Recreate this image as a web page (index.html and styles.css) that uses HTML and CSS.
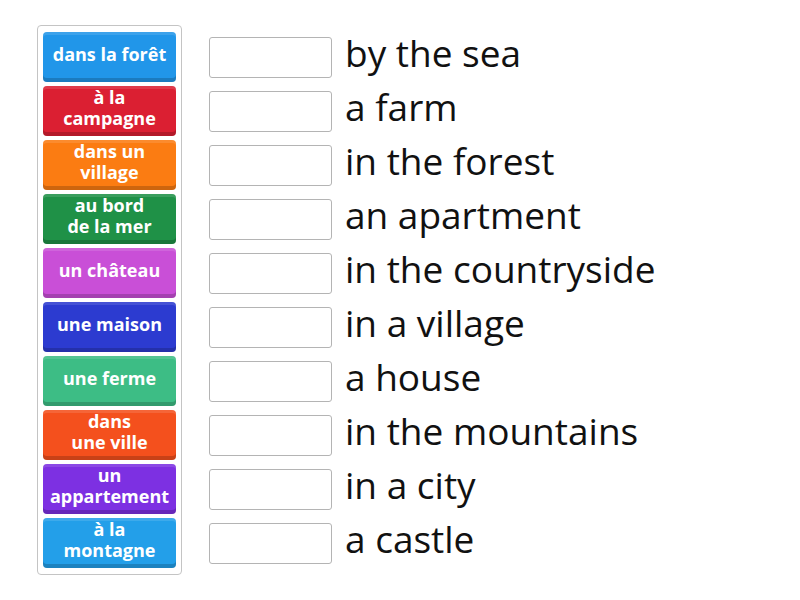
FILE: index.html
```html
<!DOCTYPE html>
<html>
<head>
<meta charset="utf-8">
<link rel="stylesheet" href="styles.css">
</head>
<body>
<div class="page">
  <div class="bank">
    <div class="tile c1"><span>dans la forêt</span></div>
    <div class="tile c2"><span>à la<br>campagne</span></div>
    <div class="tile c3"><span>dans un<br>village</span></div>
    <div class="tile c4"><span>au bord<br>de la mer</span></div>
    <div class="tile c5"><span>un château</span></div>
    <div class="tile c6"><span>une maison</span></div>
    <div class="tile c7"><span>une ferme</span></div>
    <div class="tile c8"><span>dans<br>une ville</span></div>
    <div class="tile c9"><span>un<br>appartement</span></div>
    <div class="tile c10"><span>à la<br>montagne</span></div>
  </div>
  <div class="targets">
    <div class="row"><div class="box"></div><div class="label">by the sea</div></div>
    <div class="row"><div class="box"></div><div class="label">a farm</div></div>
    <div class="row"><div class="box"></div><div class="label">in the forest</div></div>
    <div class="row"><div class="box"></div><div class="label">an apartment</div></div>
    <div class="row"><div class="box"></div><div class="label">in the countryside</div></div>
    <div class="row"><div class="box"></div><div class="label">in a village</div></div>
    <div class="row"><div class="box"></div><div class="label">a house</div></div>
    <div class="row"><div class="box"></div><div class="label">in the mountains</div></div>
    <div class="row"><div class="box"></div><div class="label">in a city</div></div>
    <div class="row"><div class="box"></div><div class="label">a castle</div></div>
  </div>
</div>
</body>
</html>
```
FILE: styles.css
```css
html, body {
  margin: 0;
  padding: 0;
  background: #ffffff;
  font-family: "Open Sans", "Liberation Sans", sans-serif;
}
.page {
  display: flex;
  align-items: flex-start;
  padding: 25px 0 0 37px;
}
.bank {
  display: flex;
  flex-direction: column;
  gap: 4px;
  padding: 6px 5px 6px 5px;
  border: 1px solid #c4c4c4;
  border-radius: 4px;
}
.tile {
  width: 133px;
  height: 50px;
  box-sizing: border-box;
  border-radius: 4px;
  display: flex;
  align-items: center;
  justify-content: center;
  text-align: center;
  color: #ffffff;
  font-weight: 700;
  font-size: 18px;
  line-height: 21px;
  padding-bottom: 6px;
  box-shadow: inset 0 -4px 0 rgba(0,0,0,0.18), inset 0 3px 0 rgba(255,255,255,0.12);
}
.c1 { background: #2196e9; }
.c2 { background: #db1f32; }
.c3 { background: #fb7c12; }
.c4 { background: #1f9147; }
.c5 { background: #c94fd7; }
.c6 { background: #2c3bd0; }
.c7 { background: #3dbd85; }
.c8 { background: #f4501d; }
.c9 { background: #7d30e2; }
.c10 { background: #239fe9; }
.targets {
  display: flex;
  flex-direction: column;
  gap: 4px;
  margin-left: 27px;
  padding-top: 7px;
}
.row {
  height: 50px;
  display: flex;
  align-items: center;
}
.box {
  width: 123px;
  height: 41px;
  box-sizing: border-box;
  border: 1px solid #b4b4b4;
  border-radius: 3px;
  background: #fff;
}
.label {
  margin-left: 13px;
  font-size: 37px;
  color: #111111;
  line-height: 44px;
  padding-bottom: 9px;
}
```
